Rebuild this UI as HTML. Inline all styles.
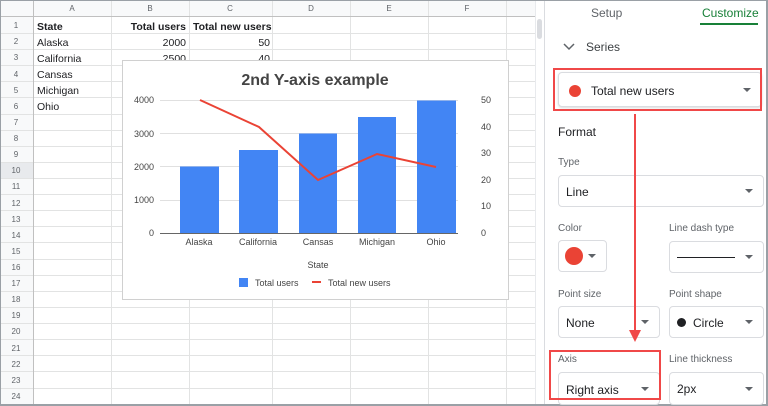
<!DOCTYPE html><html><head><style>
body{margin:0;width:768px;height:406px;overflow:hidden;font-family:"Liberation Sans",Arial,sans-serif;background:#fff;position:relative}
.a{position:absolute}
.lbl{position:absolute;font-size:10px;color:#5f6368}
.dd{position:absolute;border:1px solid #dadce0;border-radius:4px;background:#fff;box-sizing:border-box;font-size:12px;color:#202124}
.car{position:absolute;right:10px;top:50%;margin-top:-2px;width:0;height:0;border-left:4px solid transparent;border-right:4px solid transparent;border-top:4px solid #5f6368}
</style></head><body>
<svg class="a" style="left:0;top:0" width="545" height="406" font-family="Liberation Sans,Arial,sans-serif">
<rect x="0" y="0" width="33" height="406" fill="#f8f9fa"/>
<rect x="0" y="0" width="545" height="17" fill="#f8f9fa"/>
<rect x="0" y="162" width="33" height="16" fill="#e8eaed"/>
<g stroke="#e2e3e3" stroke-width="1">
<line x1="111.5" y1="0" x2="111.5" y2="406"/><line x1="189.5" y1="0" x2="189.5" y2="406"/><line x1="272.5" y1="0" x2="272.5" y2="406"/><line x1="350.5" y1="0" x2="350.5" y2="406"/><line x1="428.5" y1="0" x2="428.5" y2="406"/><line x1="506.5" y1="0" x2="506.5" y2="406"/>
<line x1="0" y1="33.5" x2="535" y2="33.5"/><line x1="0" y1="49.5" x2="535" y2="49.5"/><line x1="0" y1="65.5" x2="535" y2="65.5"/><line x1="0" y1="81.5" x2="535" y2="81.5"/><line x1="0" y1="97.5" x2="535" y2="97.5"/><line x1="0" y1="114.5" x2="535" y2="114.5"/><line x1="0" y1="130.5" x2="535" y2="130.5"/><line x1="0" y1="146.5" x2="535" y2="146.5"/><line x1="0" y1="162.5" x2="535" y2="162.5"/><line x1="0" y1="178.5" x2="535" y2="178.5"/><line x1="0" y1="194.5" x2="535" y2="194.5"/><line x1="0" y1="210.5" x2="535" y2="210.5"/><line x1="0" y1="226.5" x2="535" y2="226.5"/><line x1="0" y1="242.5" x2="535" y2="242.5"/><line x1="0" y1="259.5" x2="535" y2="259.5"/><line x1="0" y1="275.5" x2="535" y2="275.5"/><line x1="0" y1="291.5" x2="535" y2="291.5"/><line x1="0" y1="307.5" x2="535" y2="307.5"/><line x1="0" y1="323.5" x2="535" y2="323.5"/><line x1="0" y1="339.5" x2="535" y2="339.5"/><line x1="0" y1="355.5" x2="535" y2="355.5"/><line x1="0" y1="371.5" x2="535" y2="371.5"/><line x1="0" y1="388.5" x2="535" y2="388.5"/>
</g>
<line x1="33.5" y1="0" x2="33.5" y2="406" stroke="#c0c0c0"/><line x1="0" y1="16.5" x2="535" y2="16.5" stroke="#c0c0c0"/>
<g font-size="8" fill="#5f6368" text-anchor="middle">
<text x="72" y="11">A</text><text x="150" y="11">B</text><text x="230" y="11">C</text><text x="311" y="11">D</text><text x="389" y="11">E</text><text x="467" y="11">F</text>
<text x="16" y="28">1</text><text x="16" y="44">2</text><text x="16" y="60">3</text><text x="16" y="77">4</text><text x="16" y="93">5</text><text x="16" y="109">6</text><text x="16" y="125">7</text><text x="16" y="141">8</text><text x="16" y="157">9</text><text x="16" y="173">10</text><text x="16" y="189">11</text><text x="16" y="206">12</text><text x="16" y="222">13</text><text x="16" y="238">14</text><text x="16" y="254">15</text><text x="16" y="270">16</text><text x="16" y="286">17</text><text x="16" y="302">18</text><text x="16" y="318">19</text><text x="16" y="334">20</text><text x="16" y="351">21</text><text x="16" y="367">22</text><text x="16" y="383">23</text><text x="16" y="399">24</text>
</g>
<g font-size="10.5" fill="#202124">
<text x="37" y="30" font-weight="bold">State</text><text x="186" y="30" font-weight="bold" text-anchor="end">Total users</text><text x="193" y="30" font-weight="bold">Total new users</text>
<text x="37" y="46">Alaska</text><text x="186" y="46" text-anchor="end">2000</text><text x="270" y="46" text-anchor="end">50</text>
<text x="37" y="62">California</text><text x="186" y="62" text-anchor="end">2500</text><text x="270" y="62" text-anchor="end">40</text>
<text x="37" y="78">Cansas</text><text x="37" y="94">Michigan</text><text x="37" y="110">Ohio</text>
</g>
<rect x="535" y="0" width="10" height="406" fill="#fff"/><line x1="535.5" y1="0" x2="535.5" y2="406" stroke="#e8eaed"/>
<rect x="537" y="19" width="5" height="20" rx="2.5" fill="#dadce0"/>
<line x1="544.5" y1="0" x2="544.5" y2="406" stroke="#dadce0"/>
<rect x="122.5" y="60.5" width="386" height="239" fill="#fff" stroke="#d0d0d0"/>
<text x="315" y="85" font-size="16" font-weight="bold" fill="#444" text-anchor="middle">2nd Y-axis example</text>
<g stroke="#e0e0e0"><line x1="160" y1="100.5" x2="458" y2="100.5"/><line x1="160" y1="133.5" x2="458" y2="133.5"/><line x1="160" y1="166.5" x2="458" y2="166.5"/><line x1="160" y1="200.5" x2="458" y2="200.5"/></g>
<g fill="#4285f4"><rect x="180" y="166.5" width="39" height="66.5"/><rect x="239" y="150" width="39" height="83"/><rect x="299" y="133.5" width="38" height="99.5"/><rect x="358" y="117" width="38" height="116"/><rect x="417" y="100.5" width="39" height="132.5"/></g>
<line x1="160" y1="233.5" x2="458" y2="233.5" stroke="#666"/>
<polyline points="200,100 259,127 318,180 377,154 436,167" fill="none" stroke="#ea4335" stroke-width="2"/>
<g font-size="9" fill="#444" text-anchor="end"><text x="154" y="103">4000</text><text x="154" y="137">3000</text><text x="154" y="170">2000</text><text x="154" y="203">1000</text><text x="154" y="236">0</text></g>
<g font-size="9" fill="#444"><text x="481" y="103">50</text><text x="481" y="130">40</text><text x="481" y="156">30</text><text x="481" y="183">20</text><text x="481" y="209">10</text><text x="481" y="236">0</text></g>
<g font-size="9" fill="#444" text-anchor="middle"><text x="199" y="245">Alaska</text><text x="258" y="245">California</text><text x="318" y="245">Cansas</text><text x="377" y="245">Michigan</text><text x="436" y="245">Ohio</text><text x="318" y="268">State</text></g>
<rect x="239" y="278" width="9" height="9" fill="#4285f4"/><text x="255" y="286" font-size="9" fill="#444">Total users</text>
<rect x="312" y="281" width="9" height="2" fill="#ea4335"/><text x="328" y="286" font-size="9" fill="#444">Total new users</text>
</svg>
<div class="a" style="left:0;top:0;width:768px;height:1px;background:#9aa0a6"></div>
<div class="a" style="left:0;top:0;width:1px;height:406px;background:#9aa0a6"></div>
<div class="a" style="left:0;top:404px;width:768px;height:2px;background:#9aa0a6"></div>
<div class="a" style="left:766px;top:0;width:2px;height:406px;background:#9aa0a6"></div>
<div class="a" style="left:591px;top:6px;font-size:12px;color:#5f6368">Setup</div>
<div class="a" style="left:702px;top:6px;font-size:12px;color:#188038">Customize</div>
<div class="a" style="left:700px;top:23px;width:58px;height:2px;background:#188038"></div>
<svg class="a" style="left:562px;top:42px" width="14" height="10"><polyline points="2,2 7,7 12,2" fill="none" stroke="#5f6368" stroke-width="1.5"/></svg>
<div class="a" style="left:586px;top:40px;font-size:12px;color:#3c4043">Series</div>
<div class="dd" style="left:558px;top:72px;width:204px;height:35px;box-shadow:0 1px 2px rgba(0,0,0,.15)"><div class="a" style="left:10px;top:12px;width:12px;height:12px;border-radius:50%;background:#ea4335"></div><div class="a" style="left:32px;top:11px;font-size:12px">Total new users</div><div class="car"></div></div>
<div class="a" style="left:553px;top:68px;width:209px;height:43px;border:2px solid #f04848;box-sizing:border-box"></div>
<div class="a" style="left:558px;top:125px;font-size:12px;color:#202124">Format</div>
<div class="lbl" style="left:558px;top:157px">Type</div>
<div class="dd" style="left:558px;top:175px;width:206px;height:32px"><div class="a" style="left:7px;top:9px">Line</div><div class="car"></div></div>
<div class="lbl" style="left:558px;top:223px">Color</div>
<div class="dd" style="left:558px;top:240px;width:49px;height:32px"><div class="a" style="left:6px;top:6px;width:18px;height:18px;border-radius:50%;background:#ea4335"></div><div class="car"></div></div>
<div class="lbl" style="left:669px;top:223px">Line dash type</div>
<div class="dd" style="left:669px;top:241px;width:95px;height:32px"><div class="a" style="left:7px;top:15px;width:58px;height:1px;background:#202124"></div><div class="car"></div></div>
<div class="lbl" style="left:558px;top:289px">Point size</div>
<div class="dd" style="left:558px;top:306px;width:102px;height:32px"><div class="a" style="left:7px;top:9px">None</div><div class="car"></div></div>
<div class="lbl" style="left:669px;top:289px">Point shape</div>
<div class="dd" style="left:669px;top:306px;width:95px;height:32px"><div class="a" style="left:7px;top:11px;width:9px;height:9px;border-radius:50%;background:#202124"></div><div class="a" style="left:23px;top:9px">Circle</div><div class="car"></div></div>
<div class="lbl" style="left:558px;top:354px">Axis</div>
<div class="dd" style="left:558px;top:372px;width:102px;height:33px"><div class="a" style="left:7px;top:10px">Right axis</div><div class="car"></div></div>
<div class="lbl" style="left:669px;top:354px">Line thickness</div>
<div class="dd" style="left:669px;top:372px;width:95px;height:33px"><div class="a" style="left:7px;top:9px">2px</div><div class="car"></div></div>
<div class="a" style="left:549px;top:350px;width:112px;height:50px;border:2px solid #f04848;box-sizing:border-box"></div>
<div class="a" style="left:634px;top:114px;width:2px;height:218px;background:#f04848"></div>
<div class="a" style="left:629px;top:330px;width:0;height:0;border-left:6px solid transparent;border-right:6px solid transparent;border-top:12px solid #f04848"></div>
</body></html>
